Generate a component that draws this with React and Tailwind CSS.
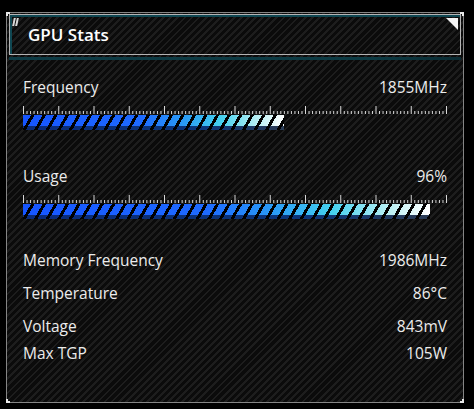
import React from "react";

const bars = [
  { label: "Frequency", value: "1855MHz", pct: 0.615 },
  { label: "Usage", value: "96%", pct: 0.96 },
];

const stats = [
  { label: "Memory Frequency", value: "1986MHz", mt: "mt-[31px]" },
  { label: "Temperature", value: "86°C", mt: "mt-[13px]" },
  { label: "Voltage", value: "843mV", mt: "mt-[13px]" },
  { label: "Max TGP", value: "105W", mt: "mt-[7px]" },
];

function Ruler() {
  const ticks = [];
  for (let i = 0; i <= 120; i++) {
    const x = 0.5 + (i * 423) / 120;
    const major = i % 10 === 0;
    ticks.push(
      <line
        key={i}
        x1={x}
        x2={x}
        y1={major ? 1 : 6}
        y2={9}
        stroke="#d8d8d8"
        strokeWidth="1"
      />
    );
  }
  return (
    <svg className="block w-full h-[9px]" viewBox="0 0 424 9" preserveAspectRatio="none">
      {ticks}
    </svg>
  );
}

function Bar({ pct }) {
  return (
    <div className="relative h-[15px]" style={{ width: `${pct * 100}%` }}>
      <div className="absolute left-0 right-0 top-0 h-[11px] bg-[linear-gradient(90deg,#1655ff_0%,#1e6aff_45%,#2a9cf5_62%,#45d0ee_76%,#b9eff3_90%,#ffffff_100%)]" />
      <div className="absolute left-0 right-0 top-[11px] h-[4px] bg-[linear-gradient(90deg,#0a2a78,#0b3578_70%,#2a3c55)]" />
      <div className="absolute inset-0 bg-[repeating-linear-gradient(120deg,transparent_0_7px,#000_7px_10px)]" />
    </div>
  );
}

export default function App() {
  return (
    <div
      className="w-[474px] h-[409px] bg-black pt-[12px] pl-[6px] text-[#ececec]"
      style={{ fontFamily: '"Open Sans", "Noto Sans", sans-serif' }}
    >
      <div className="relative w-[458px] h-[391px] border border-[#858585] bg-[repeating-linear-gradient(135deg,#0b0b0b_0_3px,#1d1d1d_3px_5px)]">
        {/* corner brackets */}
        <div className="absolute -left-px -top-px w-[4px] h-[4px] border-l-2 border-t-2 border-[#e8e8e8]" />
        <div className="absolute -right-px -top-px w-[4px] h-[4px] border-r-2 border-t-2 border-[#e8e8e8]" />
        <div className="absolute -left-px -bottom-px w-[4px] h-[4px] border-l-2 border-b-2 border-[#e8e8e8]" />
        <div className="absolute -right-px -bottom-px w-[4px] h-[4px] border-r-2 border-b-2 border-[#e8e8e8]" />

        <div className="relative mx-[2px] mt-px h-[41px] border border-[#b4b4b4] shadow-[inset_2px_2px_0_#0f4752] flex items-center pl-[18px]">
          <div className="absolute left-[3px] top-[3px] w-[2px] h-[8px] bg-[#d8d8d8] -skew-x-12" />
          <div className="absolute left-[6px] top-[3px] w-[2px] h-[8px] bg-[#d8d8d8] -skew-x-12" />
          <svg className="absolute right-[2px] top-[3px]" width="12" height="12" viewBox="0 0 12 12">
            <polygon points="0,0 12,0 12,12" fill="#f4f4f4" />
          </svg>
          <span className="text-[17px] font-semibold text-white leading-none">GPU Stats</span>
        </div>
        <div className="mx-[2px] mt-[2px] h-[3px] bg-[linear-gradient(90deg,#0d3a44,#0c3a43_80%,#0a2b33)]" />

        <div className="px-[16px]">
          {bars.map((b, i) => (
            <div key={b.label} className={i === 0 ? "mt-[17px]" : "mt-[36px]"}>
              <div className="flex justify-between h-[20px] leading-[20px] text-[15.5px]">
                <span>{b.label}</span>
                <span>{b.value}</span>
              </div>
              <div className="mt-[8px]">
                <Ruler />
              </div>
              <div className="mt-px">
                <Bar pct={b.pct} />
              </div>
            </div>
          ))}

          {stats.map((s) => (
            <div
              key={s.label}
              className={`${s.mt} flex justify-between h-[20px] leading-[20px] text-[15.5px]`}
            >
              <span>{s.label}</span>
              <span>{s.value}</span>
            </div>
          ))}
        </div>
      </div>
    </div>
  );
}
